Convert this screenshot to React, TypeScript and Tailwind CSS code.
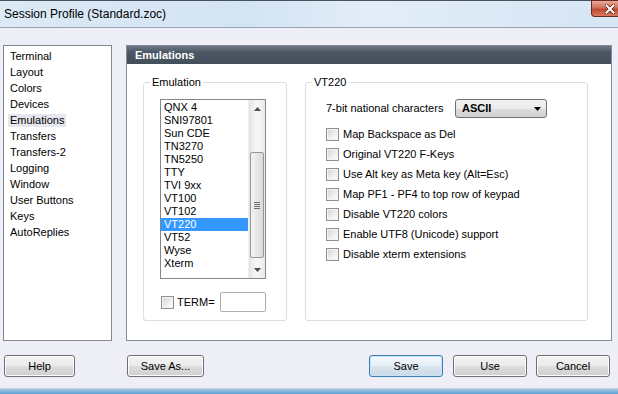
import React, { useState } from 'react';

const categories = [
  'Terminal', 'Layout', 'Colors', 'Devices', 'Emulations', 'Transfers',
  'Transfers-2', 'Logging', 'Window', 'User Buttons', 'Keys', 'AutoReplies',
];

const emulations = [
  'QNX 4', 'SNI97801', 'Sun CDE', 'TN3270', 'TN5250', 'TTY', 'TVI 9xx',
  'VT100', 'VT102', 'VT220', 'VT52', 'Wyse', 'Xterm',
];

const options = [
  'Map Backspace as Del',
  'Original VT220 F-Keys',
  'Use Alt key as Meta key (Alt=Esc)',
  'Map PF1 - PF4 to top row of keypad',
  'Disable VT220 colors',
  'Enable UTF8 (Unicode) support',
  'Disable xterm extensions',
];

function CheckBox() {
  return (
    <span className="block w-[13px] h-[13px] shrink-0 border border-[#8e8f8f] bg-[linear-gradient(135deg,#d4d4d4,#f4f4f4_70%,#ffffff)] shadow-[inset_0_0_0_1px_#f4f4f4]" />
  );
}

function Btn({ label, className = '', primary = false }: { label: string; className?: string; primary?: boolean }) {
  return (
    <button
      className={`h-[22px] rounded-[3px] border text-[11px] text-black flex items-center justify-center ${
        primary
          ? 'border-[#3c7fb1] bg-[linear-gradient(to_bottom,#f3f8fc_0%,#e6eff6_50%,#d9e5ee_51%,#cddbe7_100%)] shadow-[inset_0_0_0_1px_#c4e5f6]'
          : 'border-[#707070] bg-[linear-gradient(to_bottom,#f2f2f2_0%,#ebebeb_50%,#dddddd_51%,#cfcfcf_100%)] shadow-[inset_0_0_0_1px_#fcfcfc]'
      } ${className}`}
    >
      {label}
    </button>
  );
}

function ScrollBar() {
  return (
    <div className="w-[17px] flex flex-col bg-[linear-gradient(to_right,#e3e3e3,#f5f5f5_40%,#f5f5f5_60%,#e9e9e9)] border-l border-[#f0f0f0]">
      <div className="h-[17px] flex items-center justify-center">
        <svg width="7" height="4" viewBox="0 0 7 4"><path d="M0 4 L3.5 0 L7 4 Z" fill="#4d4d4d" /></svg>
      </div>
      <div className="flex-1 pt-[35px] px-[1px]">
        <div className="h-[106px] rounded-[2px] border border-[#979797] bg-[linear-gradient(to_right,#f3f3f3,#e8e8e8_50%,#d9d9d9)] flex items-center justify-center">
          <div className="flex flex-col gap-[1px]">
            <span className="block w-[6px] h-[1px] bg-[#6f6f6f]" />
            <span className="block w-[6px] h-[1px] bg-[#6f6f6f]" />
            <span className="block w-[6px] h-[1px] bg-[#6f6f6f]" />
            <span className="block w-[6px] h-[1px] bg-[#6f6f6f]" />
          </div>
        </div>
      </div>
      <div className="h-[17px] flex items-center justify-center">
        <svg width="7" height="4" viewBox="0 0 7 4"><path d="M0 0 L3.5 4 L7 0 Z" fill="#4d4d4d" /></svg>
      </div>
    </div>
  );
}

export default function App() {
  const [category] = useState('Emulations');
  const [emulation] = useState('VT220');

  return (
    <div className="w-[618px] h-[394px] overflow-hidden flex flex-col bg-[#eeeef6] text-black font-['Liberation_Sans',Arial,sans-serif]">
      {/* Title bar */}
      <div className="h-[28px] shrink-0 flex items-start justify-between border-t border-[#4a5260] border-b border-b-[#9aa6b6] bg-[linear-gradient(to_right,#dce9f6,#d3e4f4_40%,#e2edf8_60%,#d6e6f5)]">
        <span className="pl-[4px] pt-[6px] text-[12px] leading-[15px]">Session Profile (Standard.zoc)</span>
        <div className="w-[27px] h-[17px] -mt-px rounded-bl-[4px] border border-[#6b2a20] border-r-0 bg-[linear-gradient(to_bottom,#e9a895,#d0705c_45%,#bf4530_55%,#d87b62)] flex items-center justify-end pr-[3px]">
          <svg width="10" height="10" viewBox="0 0 10 10">
            <path d="M1.5 1.5 L8.5 8.5 M8.5 1.5 L1.5 8.5" stroke="#5a1e14" strokeWidth="3.4" strokeLinecap="square" />
            <path d="M1.5 1.5 L8.5 8.5 M8.5 1.5 L1.5 8.5" stroke="#ffffff" strokeWidth="2" strokeLinecap="square" />
          </svg>
        </div>
      </div>

      {/* Body */}
      <div className="flex-1 flex flex-col px-[3px] pt-[17px] text-[11px]">
        <div className="flex h-[296px] gap-[14px]">
          {/* Category list */}
          <div className="w-[109px] border border-[#828790] bg-white pt-[2px] pl-[4px]">
            {categories.map((c) => (
              <div key={c} className="h-[16px] flex items-center">
                <span className={`px-[2px] leading-[13px] ${c === category ? 'bg-[#e6e6ee]' : ''}`}>{c}</span>
              </div>
            ))}
          </div>

          {/* Settings panel */}
          <div className="w-[486px] flex flex-col border border-[#848c97] bg-white">
            <div className="h-[18px] shrink-0 flex items-center pl-[8px] bg-[linear-gradient(to_bottom,#6d7785,#4c5765_35%,#444e5b)] text-white font-bold text-[11px]">
              Emulations
            </div>
            <div className="flex-1 flex pt-[18px] pl-[16px] gap-[18px]">
              {/* Emulation group */}
              <div className="relative w-[144px] h-[239px] border border-[#d5dfe5] rounded-[3px] pt-[16px] pl-[16px]">
                <span className="absolute -top-[7px] left-[6px] px-[2px] bg-white leading-[13px]">Emulation</span>
                <div className="w-[106px] h-[180px] border border-[#828790] bg-white flex">
                  <div className="flex-1 pt-[1px]">
                    {emulations.map((e) => (
                      <div
                        key={e}
                        className={`h-[13px] leading-[13px] pl-[3px] text-[11px] ${
                          e === emulation ? 'bg-[#3399ff] text-white' : ''
                        }`}
                      >
                        {e}
                      </div>
                    ))}
                  </div>
                  <ScrollBar />
                </div>
                <div className="flex items-center mt-[13px] h-[20px]">
                  <span className="ml-[1px]"><CheckBox /></span>
                  <span className="ml-[3px]">TERM=</span>
                  <span className="ml-[5px] w-[46px] h-[20px] border border-[#abadb3] rounded-[2px] bg-white" />
                </div>
              </div>

              {/* VT220 group */}
              <div className="relative w-[283px] h-[239px] border border-[#d5dfe5] rounded-[3px] pt-[16px] pl-[20px]">
                <span className="absolute -top-[7px] left-[6px] px-[2px] bg-white leading-[13px]">VT220</span>
                <div className="flex items-center h-[19px]">
                  <span className="w-[129px]">7-bit national characters</span>
                  <div className="w-[92px] h-[19px] rounded-[3px] border border-[#707070] bg-[linear-gradient(to_bottom,#f2f2f2_0%,#ebebeb_50%,#dddddd_51%,#cfcfcf_100%)] flex items-center justify-between pl-[6px] pr-[5px]">
                    <span className="font-bold">ASCII</span>
                    <svg width="7" height="4" viewBox="0 0 7 4"><path d="M0 0 L3.5 4 L7 0 Z" fill="#000" /></svg>
                  </div>
                </div>
                <div className="mt-[6px] flex flex-col">
                  {options.map((o) => (
                    <div key={o} className="h-[20px] flex items-center gap-[4px]">
                      <CheckBox />
                      <span>{o}</span>
                    </div>
                  ))}
                </div>
              </div>
            </div>
          </div>
        </div>

        {/* Buttons */}
        <div className="flex items-center mt-[14px] pr-[5px]">
          <Btn label="Help" className="ml-[1px] w-[71px]" />
          <Btn label="Save As..." className="ml-[52px] w-[77px]" />
          <div className="flex-1" />
          <Btn label="Save" primary className="w-[74px]" />
          <Btn label="Use" className="ml-[10px] w-[74px]" />
          <Btn label="Cancel" className="ml-[9px] w-[74px]" />
        </div>
      </div>

      {/* Window bottom edge */}
      <div className="h-[6px] shrink-0 border-t border-[#c8d4e2] bg-[linear-gradient(to_bottom,#a9cbe8,#5e9ccf)]" />
    </div>
  );
}
